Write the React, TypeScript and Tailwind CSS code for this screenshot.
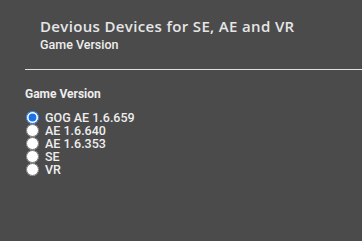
import React from "react";

const options = ["GOG AE 1.6.659", "AE 1.6.640", "AE 1.6.353", "SE", "VR"];

export default function App() {
  return (
    <div className="w-[362px] h-[241px] bg-[#4b4b4b] overflow-hidden text-[#eeeeee]">
      <div className="pl-[40px] pt-[16px]">
        <div className="text-[15px] leading-[20px] font-semibold tracking-[0.35px] text-[#e6e6e6]" style={{ fontFamily: '"Open Sans", sans-serif' }}>
          Devious Devices for SE, AE and VR
        </div>
        <div className="text-[12.5px] leading-[16px] mt-[1px] font-medium" style={{ fontFamily: 'Roboto, sans-serif' }}>
          Game Version
        </div>
      </div>
      <div className="ml-[25px] mt-[16px] h-px bg-[#e0e0e0]" />
      <div className="pl-[25px] pt-[17px]" style={{ fontFamily: 'Roboto, sans-serif' }}>
        <div className="text-[12px] leading-[14px] font-bold">Game Version</div>
        <div className="mt-[10px] flex flex-col">
          {options.map((o, i) => (
            <label key={o} className="flex items-center h-[13px] text-[12.5px] leading-[13px] font-medium">
              <input
                type="radio"
                name="gv"
                defaultChecked={i === 0}
                className="m-0 ml-[1px] w-[13px] h-[13px] accent-[#1a73e8]"
              />
              <span className="ml-[6px] leading-[13px]">{o}</span>
            </label>
          ))}
        </div>
      </div>
    </div>
  );
}
